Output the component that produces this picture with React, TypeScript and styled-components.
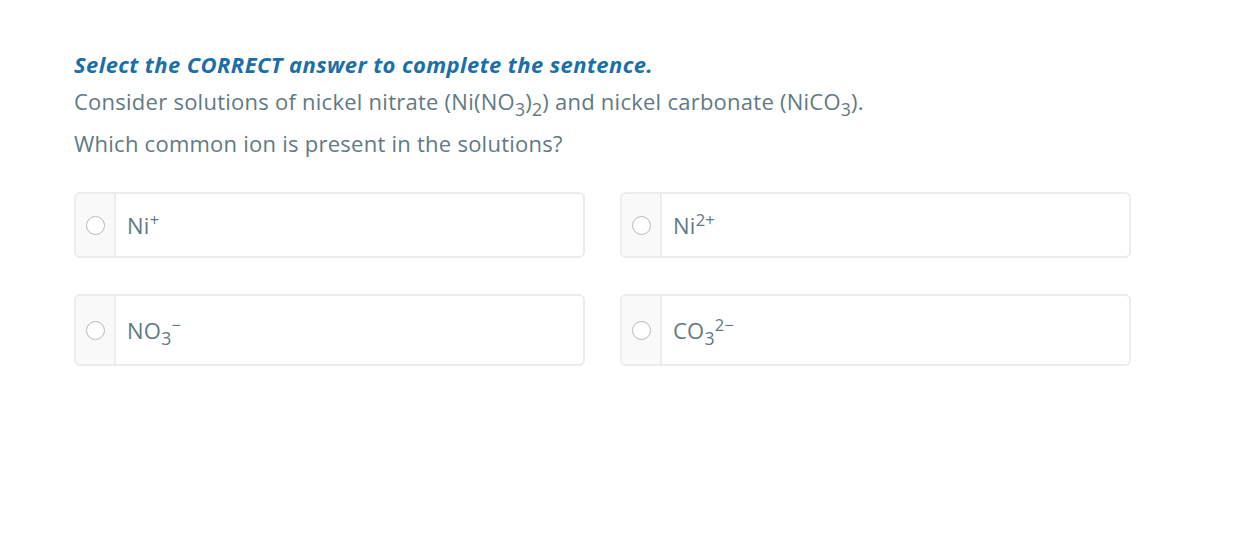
import React from 'react';
import styled, { createGlobalStyle } from 'styled-components';

const GlobalStyle = createGlobalStyle`
  html, body {
    margin: 0;
    padding: 0;
    background: #ffffff;
  }
  body {
    font-family: "Open Sans", "Noto Sans", sans-serif;
  }
`;

const Page = styled.div`
  width: 1253px;
  height: 546px;
  box-sizing: border-box;
  padding: 50px 0 0 74px;
`;

const Question = styled.div`
  width: 1057px;
`;

const Instruction = styled.div`
  color: #1a6fa8;
  font-size: 22px;
  font-weight: 700;
  font-style: italic;
  letter-spacing: 0.4px;
  line-height: 28px;
`;

const Prompt = styled.p`
  margin: 8px 0 0;
  color: #5f7a84;
  font-size: 22px;
  letter-spacing: 0.25px;
  line-height: 30px;
`;

const Ask = styled(Prompt)`
  margin-top: 12px;
`;

const Options = styled.div`
  margin-top: 34px;
  display: grid;
  grid-template-columns: 511px 511px;
  column-gap: 35px;
  row-gap: 36px;
`;

const Option = styled.label<{ $tall?: boolean }>`
  display: flex;
  height: ${p => (p.$tall ? 72 : 66)}px;
  box-sizing: border-box;
  border: 2px solid #ececec;
  border-radius: 6px;
  overflow: hidden;
  cursor: pointer;
  background: #fff;
`;

const RadioCell = styled.div`
  width: 38px;
  flex: none;
  display: flex;
  align-items: center;
  justify-content: center;
  background: #f9f9f9;
  border-right: 2px solid #ececec;
`;

const Radio = styled.span`
  width: 19px;
  height: 19px;
  box-sizing: border-box;
  border: 1px solid #b9b9b9;
  border-radius: 50%;
  background: #fff;
`;

const Label = styled.div`
  display: flex;
  align-items: center;
  padding-left: 11px;
  color: #5f7a84;
  font-size: 22px;
  letter-spacing: 0.25px;
  line-height: 1;
`;

const Sub = styled.sub`
  font-size: 0.8em;
  line-height: 0;
  vertical-align: -0.35em;
`;

const Sup = styled.sup`
  font-size: 0.75em;
  line-height: 0;
  vertical-align: 0.5em;
`;

const options: { key: string; tall?: boolean; label: React.ReactNode }[] = [
  { key: 'a', label: <>Ni<Sup>+</Sup></> },
  { key: 'b', label: <>Ni<Sup>2+</Sup></> },
  { key: 'c', tall: true, label: <>NO<Sub>3</Sub><Sup>−</Sup></> },
  { key: 'd', tall: true, label: <>CO<Sub>3</Sub><Sup>2−</Sup></> },
];

export default function App() {
  return (
    <>
      <GlobalStyle />
      <Page>
        <Question>
          <Instruction>Select the CORRECT answer to complete the sentence.</Instruction>
          <Prompt>
            Consider solutions of nickel nitrate (Ni(NO<Sub>3</Sub>)<Sub>2</Sub>) and nickel carbonate (NiCO<Sub>3</Sub>).
          </Prompt>
          <Ask>Which common ion is present in the solutions?</Ask>
          <Options>
            {options.map(o => (
              <Option key={o.key} $tall={o.tall}>
                <RadioCell>
                  <Radio />
                </RadioCell>
                <Label>
                  <span>{o.label}</span>
                </Label>
              </Option>
            ))}
          </Options>
        </Question>
      </Page>
    </>
  );
}
